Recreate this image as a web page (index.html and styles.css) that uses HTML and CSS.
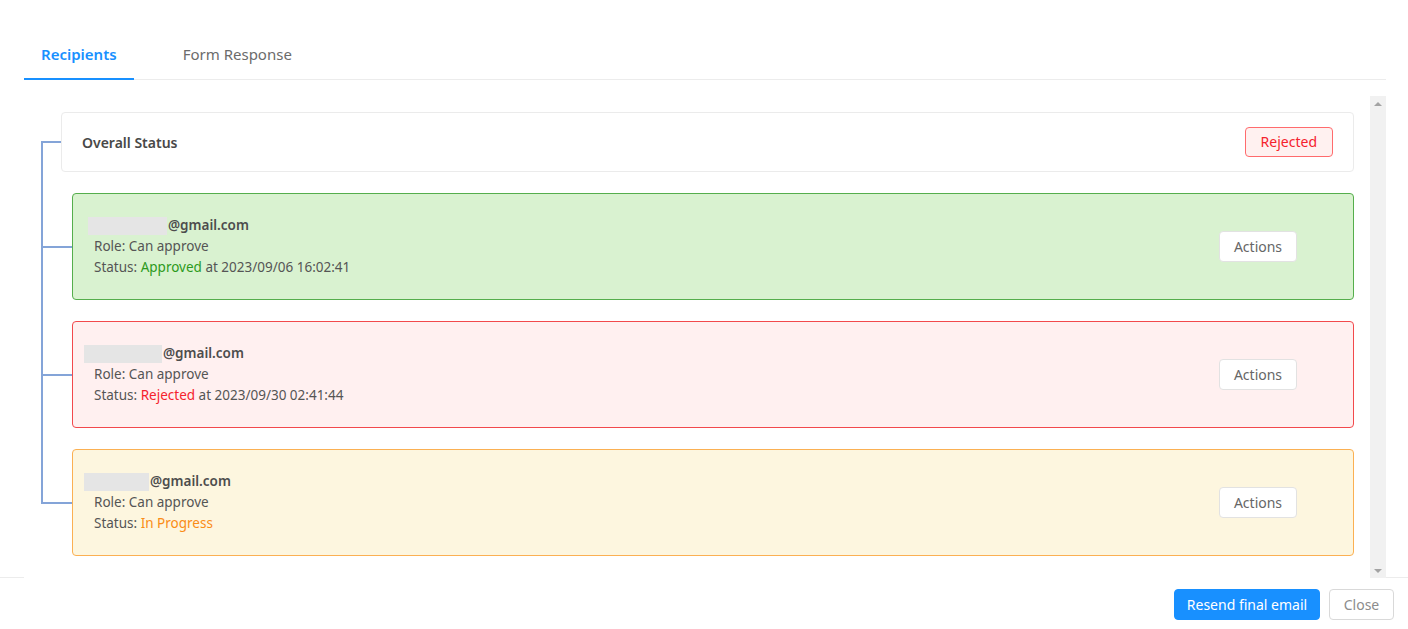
FILE: index.html
```html
<!DOCTYPE html>
<html lang="en">
<head>
<meta charset="utf-8">
<title>Recipients</title>
<link rel="stylesheet" href="styles.css">
</head>
<body>
<div class="modal">
  <div class="tabs">
    <div class="tab active">Recipients</div>
    <div class="tab">Form Response</div>
  </div>
  <div class="body">
    <div class="scroll-content">
      <div class="tree">
        <div class="overall node-overall">
          <span class="overall-title">Overall Status</span>
          <span class="tag-rejected">Rejected</span>
        </div>
        <div class="card card-green node-card">
          <div class="card-info">
            <div class="email shift-a"><span class="mask mask-1"></span>@gmail.com</div>
            <div>Role: Can approve</div>
            <div>Status: <span class="st-approved">Approved</span> at 2023/09/06 16:02:41</div>
          </div>
          <button class="btn-actions">Actions</button>
        </div>
        <div class="card card-red node-card">
          <div class="card-info">
            <div class="email shift-b"><span class="mask mask-2"></span>@gmail.com</div>
            <div>Role: Can approve</div>
            <div>Status: <span class="st-rejected">Rejected</span> at 2023/09/30 02:41:44</div>
          </div>
          <button class="btn-actions">Actions</button>
        </div>
        <div class="card card-yellow node-card">
          <div class="card-info">
            <div class="email shift-b"><span class="mask mask-3"></span>@gmail.com</div>
            <div>Role: Can approve</div>
            <div>Status: <span class="st-progress">In Progress</span></div>
          </div>
          <button class="btn-actions">Actions</button>
        </div>
      </div>
    </div>
    <div class="scrollbar">
      <span class="arrow-up"></span>
      <span class="arrow-down"></span>
    </div>
  </div>
  <div class="footer">
    <button class="btn-primary">Resend final email</button>
    <button class="btn-default">Close</button>
  </div>
</div>
</body>
</html>
```

FILE: styles.css
```css
* { box-sizing: border-box; }
html, body { margin: 0; padding: 0; background: #fff; }
body {
  font-family: "Noto Sans", "Open Sans", Arial, sans-serif;
  font-size: 14px;
  color: #555;
}
.modal {
  width: 1408px;
  height: 629px;
  display: flex;
  flex-direction: column;
  overflow: hidden;
}
.tabs {
  margin: 0 22px 0 24px;
  padding-top: 31px;
  border-bottom: 1px solid #ececec;
  display: flex;
  flex: none;
}
.tab {
  padding: 11px 17px 12px 17px;
  font-size: 15px;
  line-height: 24px;
  color: #6b6b6b;
  margin-right: 32px;
  border-bottom: 2px solid transparent;
  margin-bottom: -1px;
}
.tab.active {
  color: #1890ff;
  font-weight: 600;
  border-bottom-color: #1890ff;
}
.body {
  margin: 16px 22px -1px 24px;
  flex: 1;
  display: flex;
  overflow: hidden;
  background: #fff;
  position: relative;
  z-index: 1;
}
.scroll-content {
  flex: 1;
  padding: 16px 16px 0 16px;
  overflow: hidden;
}
.scrollbar {
  width: 16px;
  flex: none;
  background: #f1f1f1;
  display: flex;
  flex-direction: column;
  justify-content: space-between;
  align-items: center;
  padding: 6px 0 5px;
}
.arrow-up {
  width: 0; height: 0;
  border-left: 4px solid transparent;
  border-right: 4px solid transparent;
  border-bottom: 4px solid #a3a3a3;
}
.arrow-down {
  width: 0; height: 0;
  border-left: 4px solid transparent;
  border-right: 4px solid transparent;
  border-top: 4px solid #a3a3a3;
}
.tree {
  position: relative;
  padding-left: 21px;
}
.tree::before {
  content: "";
  position: absolute;
  left: 1px;
  top: 30px;
  bottom: 53px;
  width: 2px;
  background: #84a4d8;
}
.node-overall, .node-card { position: relative; }
.node-overall::before, .node-card::before {
  content: "";
  position: absolute;
  top: 50%;
  height: 2px;
  margin-top: -1px;
  background: #84a4d8;
}
.node-overall::before { left: -21px; width: 20px; }
.node-card::before { left: -32px; width: 31px; }
.overall {
  display: flex;
  justify-content: space-between;
  align-items: center;
  border: 1px solid #ebebeb;
  border-radius: 4px;
  padding: 14px 20px;
  height: 60px;
}
.overall-title {
  font-weight: 600;
  color: #484848;
}
.tag-rejected {
  height: 30px;
  line-height: 28px;
  padding: 0 15px;
  border: 1px solid #ff6b6d;
  background: #fff1f0;
  color: #f5222d;
  border-radius: 4px;
}
.card {
  margin-left: 11px;
  margin-top: 21px;
  border: 1px solid;
  border-radius: 4px;
  padding: 21px 56px 21px 21px;
  height: 107px;
  display: flex;
  justify-content: space-between;
  align-items: center;
  line-height: 21px;
}
.card-info { font-size: 13.5px; }
.card-green { background: #d9f2d0; border-color: #55ae4c; }
.card-red { background: #fff0f0; border-color: #f2494c; }
.card-yellow { background: #fdf6df; border-color: #fbb052; }
.email {
  display: flex;
  align-items: center;
  font-weight: 600;
  color: #4d4d4d;
}
.shift-a { margin-left: -6px; }
.shift-b { margin-left: -10px; }
.mask {
  display: inline-block;
  height: 18px;
  background: #e5e5e5;
  margin-right: 1px;
}
.mask-1 { width: 79px; }
.mask-2 { width: 78px; }
.mask-3 { width: 65px; }
.st-approved { color: #2c9a1c; }
.st-rejected { color: #f5222d; }
.st-progress { color: #fa8c16; }
.btn-actions {
  font-family: inherit;
  font-size: 14px;
  height: 31px;
  width: 78px;
  padding: 0;
  background: #fff;
  border: 1px solid #e2e2e2;
  border-radius: 4px;
  color: #666;
}
.footer {
  flex: none;
  height: 52px;
  border-top: 1px solid #ececec;
  display: flex;
  justify-content: flex-end;
  align-items: flex-start;
  gap: 9px;
  padding: 11px 14px 9px;
}
.btn-primary, .btn-default {
  font-family: inherit;
  font-size: 14px;
  height: 31px;
  border-radius: 4px;
  padding: 0;
}
.btn-primary {
  width: 146px;
  background: #1890ff;
  border: 1px solid #1890ff;
  color: #fff;
}
.btn-default {
  width: 65px;
  background: #fff;
  border: 1px solid #d9d9d9;
  color: #8c8c8c;
}
```
